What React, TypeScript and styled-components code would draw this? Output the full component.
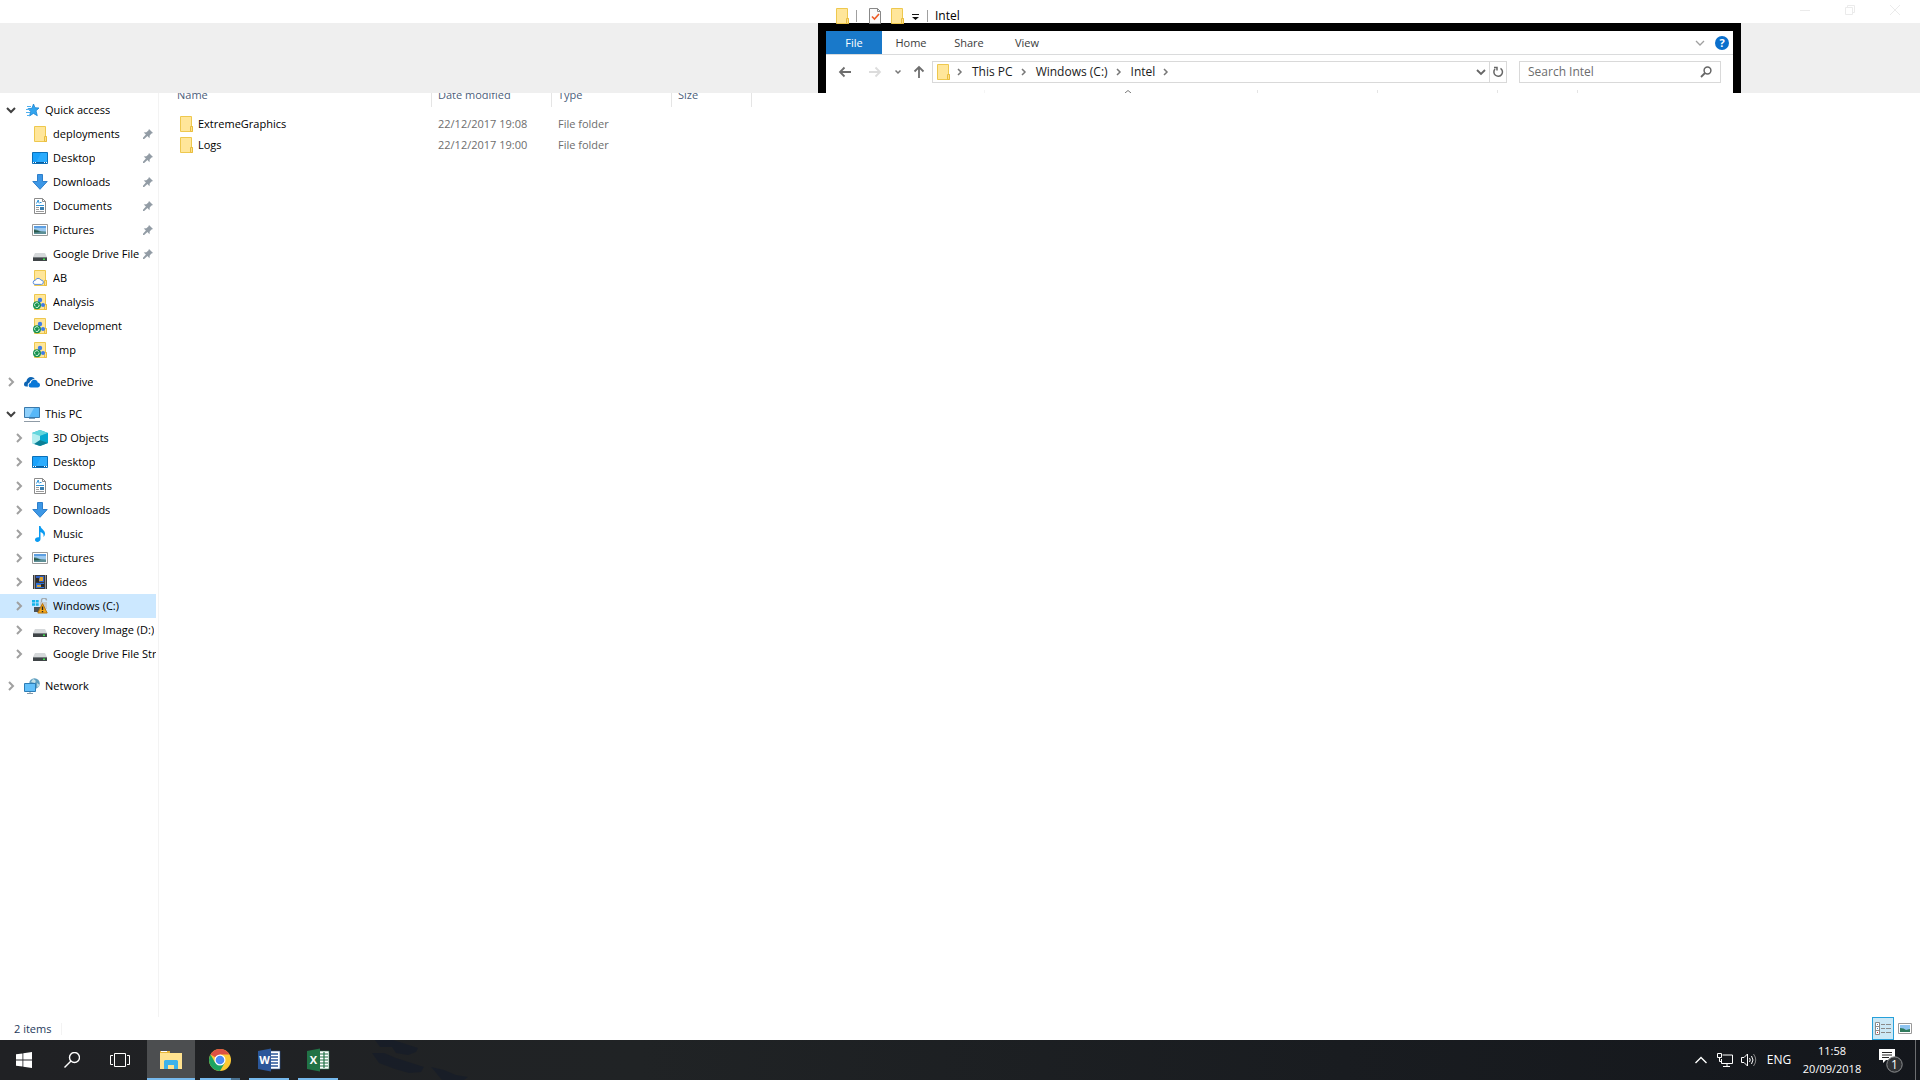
import React from 'react';
import styled, { createGlobalStyle } from 'styled-components';

const Global = createGlobalStyle`
  *{box-sizing:border-box}
  body{margin:0;background:#fff;font-family:"Open Sans","Noto Sans",sans-serif;font-size:12px;line-height:16px;color:#000}
  button,input{font:inherit;color:inherit;border:0;background:none;padding:0;margin:0}
  a{color:inherit;text-decoration:none}
  svg{display:block;flex:none}
  ul{list-style:none;margin:0;padding:0}
`;

/* ---------- icons ---------- */
const Svg = ({ w = 16, h = w, children }: { w?: number; h?: number; children?: React.ReactNode }) => (
  <svg width={w} height={h} viewBox={`0 0 ${w} ${h}`} aria-hidden="true">{children}</svg>
);
const FolderShape = () => (
  <>
    <path d="M2.5.5h11v10h.8v5H2.5z" fill="#ffe69a" stroke="#eec84e" />
    <path d="M12.5 10.5h2v5h-2z" fill="#ffe08a" stroke="#e8bd3f" />
  </>
);
const Folder = () => <Svg><FolderShape /></Svg>;
const CloudFolder = () => (
  <Svg><FolderShape /><path d="M3 14.4a2 2 0 0 1 .3-4 3 3 0 0 1 5.6-.3 2 2 0 0 1 .6 4.3z" fill="#fff" stroke="#5b8fe0" /></Svg>
);
const SharedFolder = () => (
  <Svg>
    <FolderShape />
    <circle cx="8" cy="6" r="2.2" fill="#3f7de8" /><circle cx="11" cy="11" r="2" fill="#3f7de8" />
    <circle cx="5" cy="11.3" r="4" fill="#16924f" />
    <path d="M3 12.2a2.2 2.2 0 0 1 3.6-2.6M7 10.6a2.2 2.2 0 0 1-3.4 2.5" fill="none" stroke="#d8f3e2" />
  </Svg>
);
const Desktop = () => (
  <Svg>
    <path d="M.5 2.5h15v11H.5z" fill="#1aa2fb" stroke="#0a6fb8" />
    <path d="M9 3h6v9.5H4z" fill="#38b2ff" opacity=".6" />
    <path d="M1 12h14v1H1z" fill="#0b5c9c" /><path d="M1 12h1v1H1zM3 12h1v1H3zM12 12h1v1h-1zM14 12h1v1h-1z" fill="#fff" />
  </Svg>
);
const Download = () => <Svg><path d="M5.5.5h5v7h4.7L8 15.3.8 7.5h4.7z" fill="#3c97e6" stroke="#2d7fcb" /></Svg>;
const Doc = () => (
  <Svg>
    <path d="M2.5.5h8l3 3v12h-11z" fill="#fff" stroke="#8b8b8b" /><path d="M10.5.5v3h3" fill="none" stroke="#8b8b8b" />
    <path d="M4.5 5.5 6.2 2l1 3.500M8 4.500h1.500" fill="none" stroke="#2c93d8" /><path d="M4 7.500h8" stroke="#2c93d8" />
    <path d="M4 9.500h3M4 11.500h3M4 13.500h8" stroke="#9b9b9b" /><path d="M8 9h4v3H8z" fill="#3c7fae" />
  </Svg>
);
const Picture = () => (
  <Svg>
    <path d="M.5 2.5h15v11H.5z" fill="#fff" stroke="#9a9a9a" />
    <path d="M2 4h12v8H2z" fill="#9cc9f0" /><path d="M2 4h12v2H2z" fill="#5d9fe2" />
    <path d="M2 7q3 .5 6 2l6 .5V12H2z" fill="#5d8f96" /><path d="M2 8q4 .4 7 2l-7 .5z" fill="#28584a" />
  </Svg>
);
const Drive = () => (
  <Svg>
    <path d="M3 7h10l2 4H1z" fill="#d5d8da" /><path d="M1 11h14v4H1z" fill="#3f4447" /><path d="M1 11h14v1H1z" fill="#777c80" />
    <path d="M11 12.500h2v1.500h-2z" fill="#3fe04e" />
  </Svg>
);
const Star = () => (
  <Svg>
    <path d="m9.500 2 1.500 3.700 4 .3-3 2.800 1.300 4.900-3.900-2.300L5.500 14l1.200-4.400L4 6.700l3.900-.4z" fill="#32a5ef" stroke="#1b83d2" strokeWidth=".8" />
    <path d="M3 4.500h4M2 7.500h4M2 10.500h4M3 13.500h3" stroke="#4fb0ef" />
  </Svg>
);
const Cloud = () => (
  <Svg>
    <path d="M0 10.500C0 8.500 1.200 7.500 2.400 7.400 2.800 4.700 4.500 3 7 3c1.800 0 3 .8 3.700 2C7.500 5 6 7 5.600 8.600 4 9 3.300 11 4 12.500H2C.8 12.500 0 11.600 0 10.500z" fill="#0c64b4" />
    <path d="M7 13.500a2.300 2.300 0 0 1-.2-4.600C7.200 6.800 8.700 5.700 10.400 5.700c1.800 0 3 1 3.300 2.700 1.400.1 2.300 1.200 2.300 2.600 0 1.500-1 2.500-2.400 2.500z" fill="#0a78d7" />
  </Svg>
);
const Pc = () => (
  <Svg>
    <path d="M.5 1.500h15v10H.5z" fill="#58b8f8" stroke="#3a79ab" /><path d="M1 2h9L5 11H1z" fill="#8fd0fb" />
    <path d="M5 12.500h6" stroke="#7aa0bd" /><path d="M0 15.500h16" stroke="#8f9ba6" />
  </Svg>
);
const Cube = () => (
  <Svg>
    <path d="M8 0l8 3v10l-8 3-8-3V3z" fill="#1cb4cf" /><path d="M0 3l8 2v11l-8-3z" fill="#b3eef0" />
    <path d="M0 3l8-3 8 3-8 3z" fill="#63d6dc" /><path d="M8 6l8-3v10l-8-3z" fill="#06a8d0" /><path d="M8 10l8 3-8 3-6-2z" fill="#0a7f96" />
  </Svg>
);
const Music = () => <Svg><path d="M7 0h1.500c.3 3 4.500 4 4.500 7.500 0 1.500-.6 2.600-1.500 3.500.6-3-.8-4.300-3-5v7c0 1.800-1.500 2.900-3.200 2.900C4 15.900 3 15 3 13.700c0-1.500 1.600-2.700 4-2.400z" fill="#0a9bf2" /></Svg>;
const Video = () => (
  <Svg>
    <path d="M1 1h14v14H1z" fill="#3b3b3b" />
    <path d="M2.500 1.500v14M13.500 1.500v14" stroke="#eee" strokeDasharray="1 1" />
    <path d="M4 2h8v6H4z" fill="#2f5fc4" /><path d="M4 9h8v5H4z" fill="#2b6fd8" />
    <path d="M8 3h3v4H7z" fill="#e0a22c" /><path d="M5 11h4v2H5z" fill="#d9a53a" /><path d="M4 4h3v4H4zM9 10h3v3H9z" fill="#2a2a2a" />
  </Svg>
);
const WinDrive = () => (
  <Svg>
    <path d="M0 2h3v2.500H0zM3.700 2h3v2.500h-3zM0 5.200h3v2.500H0zM3.700 5.200h3v2.500h-3z" fill="#14b4ea" />
    <path d="M2 9h6v5H2z" fill="#4c5154" />
    <path d="M9.500 4V2.500a2.500 2.500 0 0 1 5 0" fill="none" stroke="#a3a8ab" strokeWidth="1.400" /><path d="M8 4h7v7H8z" fill="#c3c9cd" />
    <path d="M10.500 5.500l4.700 9.500H5.800z" fill="#f3a81d" stroke="#b97610" /><path d="M10.500 8.500v3.500M10.500 13v1.200" stroke="#222" strokeWidth="1.400" />
  </Svg>
);
const Network = () => (
  <Svg>
    <circle cx="10.500" cy="5.500" r="5.300" fill="#5f9fc0" /><path d="M9 1q4 1 2 4l-4-1zM13 5l2.500 2-2 3z" fill="#c4e0e6" />
    <path d="M.5 5.500h11v8H.5z" fill="#62c0fa" stroke="#2d7db5" /><path d="M3 15.500h6M6 14v1" stroke="#8499a8" />
  </Svg>
);
const Pin = () => <Svg w={10}><path d="M6 0l4 4-1.500.6-1.800 2L6.500 9.300 4.400 7.100 1.200 10H0V8.800L2.900 5.600.7 3.500 3.400 3.300l2-1.800z" fill="#929ca5" /></Svg>;
const ChevR = () => <Svg w={8} h={10}><path d="M2 1l4 4-4 4" fill="none" stroke="#a0a0a0" strokeWidth="2" /></Svg>;
const ChevD = () => <Svg w={10} h={8}><path d="M1 2l4 4 4-4" fill="none" stroke="#404040" strokeWidth="2" /></Svg>;
const CrumbSep = () => <Svg w={6} h={8}><path d="M1 1l3 3-3 3" fill="none" stroke="#777" strokeWidth="1.500" /></Svg>;

/* ---------- layout ---------- */
const Page = styled.div`display:flex;flex-direction:column;min-height:100vh;`;
const columns = `display:grid;grid-template-columns:minmax(0,818fr) minmax(0,923fr) minmax(0,179fr);`;
const TitleBar = styled.header`${columns} height:23px;background:#fff;`;
const QuickBar = styled.div`grid-column:2;display:flex;align-items:center;padding:7px 0 0 16px;height:24px;position:relative;z-index:1;`;
const Bar = styled.span<{ $l: number; $r: number }>`width:1px;height:12px;background:#a0a0a0;margin:0 ${p => p.$r}px 0 ${p => p.$l}px;`;
const QuickButton = styled.button<{ $gap?: number }>`margin-right:${p => p.$gap || 0}px;display:flex;`;
const Title = styled.h1`font-size:12px;font-weight:400;line-height:16px;margin:0;`;
const WindowButtons = styled.div`display:flex;justify-content:flex-end;align-items:flex-start;gap:35px;padding:5px 20px 0 0;color:#ebebeb;`;
const Band = styled.section`${columns} height:70px;background:#efefef;`;
const Frame = styled.div`grid-column:2;border:8px solid #000;border-bottom:0;background:#fff;display:flex;flex-direction:column;overflow:hidden;`;
const Tabs = styled.nav`display:flex;height:24px;border-bottom:1px solid #dadbdc;align-items:stretch;flex:none;`;
const Tab = styled.button<{ $active?: boolean }>`
  font-size:11px;width:${p => (p.$active ? 56 : 58)}px;height:23px;
  background:${p => (p.$active ? '#1979ca' : 'transparent')};color:${p => (p.$active ? '#fff' : '#3b3b3b')};
`;
const TabTools = styled.div`margin-left:auto;display:flex;align-items:center;gap:10px;padding-right:4px;`;
const Help = styled.button`width:14px;height:14px;border-radius:50%;background:#0a6fcc;color:#fff;font-size:11px;font-weight:700;line-height:14px;`;
const Navigation = styled.div`display:flex;align-items:center;padding:6px 12px 0 12px;flex:none;`;
const NavButtons = styled.div`display:flex;align-items:center;gap:12px;width:94px;flex:none;`;
const Address = styled.div`display:flex;align-items:center;height:22px;border:1px solid #d9d9d9;flex:1;min-width:0;padding-left:2px;color:#1a1a1a;`;
const AddressFolder = styled.span`margin-right:6px;`;
const Crumb = styled.button`margin:0 8px 0 9px;white-space:nowrap;`;
const AddressButton = styled.button<{ $line?: boolean }>`
  display:flex;align-items:center;justify-content:center;width:17px;height:20px;
  margin-left:${p => (p.$line ? '0' : 'auto')};border-left:${p => (p.$line ? '1px solid #d9d9d9' : '0')};
`;
const Search = styled.label`display:flex;align-items:center;height:22px;border:1px solid #d9d9d9;width:202px;margin-left:12px;padding:0 8px;`;
const SearchInput = styled.input`flex:1;min-width:0;outline:0;&::placeholder{color:#6d6d6d;opacity:1}`;
const Remnant = styled.div`
  display:grid;grid-template-columns:159fr 273fr 120fr 120fr 80fr 155fr;height:3px;margin-top:7px;
  & > span{border-right:1px solid #e5e5e5;display:flex;justify-content:center;}
  & > span:first-child{border-color:#f5f5f5;}
  & > span:nth-child(2){padding-left:14px;}
`;

const Body = styled.main`display:flex;flex:1;`;
const Sidebar = styled.nav`width:159px;border-right:1px solid #f3f3f3;padding:5px 2px 0 0;flex:none;font-size:11px;`;
const Group = styled.ul`margin-bottom:8px;`;
const Item = styled.li<{ $child?: boolean; $on?: boolean }>`
  display:flex;align-items:center;height:24px;padding-left:${p => (p.$child ? 14 : 6)}px;background:${p => (p.$on ? '#cce8ff' : 'transparent')};
`;
const Toggle = styled.button`width:10px;height:10px;display:flex;align-items:center;justify-content:center;margin-right:8px;flex:none;`;
const Blank = styled.span`width:18px;flex:none;`;
const ItemLink = styled.a`display:flex;align-items:center;flex:1;min-width:0;gap:5px;`;
const Label = styled.span`white-space:nowrap;overflow:hidden;`;
const PinSlot = styled.span`padding:0 3px 0 2px;flex:none;`;

const Content = styled.section`flex:1;min-width:0;overflow:hidden;`;
const Table = styled.table`border-collapse:separate;border-spacing:0;table-layout:fixed;width:593px;font-size:11px;`;
const Th = styled.th<{ $w: number; $first?: boolean }>`
  width:${p => p.$w}px;height:14px;padding:0 0 0 ${p => (p.$first ? 18 : 6)}px;text-align:left;font-weight:400;color:#4c607a;border-right:1px solid #e5e5e5;vertical-align:top;
`;
const ThText = styled.span`display:flex;height:10px;align-items:flex-end;overflow:hidden;`;
const Td = styled.td<{ $first?: boolean }>`height:21px;padding:0 0 0 ${p => (p.$first ? 19 : 6)}px;color:${p => (p.$first ? '#000' : '#6d6d6d')};white-space:nowrap;`;
const Spacer = styled.tbody`& td{height:6px;padding:0}`;
const FileLink = styled.a`display:flex;align-items:center;gap:4px;`;
const Status = styled.footer`display:flex;align-items:center;height:23px;padding:0 8px 0 14px;color:#1e395b;font-size:11px;`;
const StatusCount = styled.span`padding-right:10px;border-right:1px solid #f3f3f3;line-height:12px;`;
const Views = styled.div`display:flex;align-items:center;margin-left:auto;gap:4px;`;
const ViewButton = styled.button<{ $on?: boolean }>`display:flex;align-items:center;justify-content:center;width:${p => (p.$on ? 22 : 14)}px;height:23px;border:${p => (p.$on ? '1px solid #26a0da' : '0')};background:${p => (p.$on ? '#cbe8f6' : 'none')};`;

const Taskbar = styled.footer`display:flex;height:40px;background:linear-gradient(90deg,#202124 0,#202325 640px,#191c20 70%,#14171c);color:#fff;`;
const Task = styled.button<{ $w?: number; $on?: boolean }>`
  width:${p => p.$w || 49}px;height:40px;display:flex;flex-direction:column;align-items:center;justify-content:center;position:relative;background:${p => (p.$on ? '#4c4e50' : 'none')};
`;
const System = styled.div`display:flex;margin-right:3px;`;
const Running = styled.span<{ $full?: boolean; $stack?: boolean }>`
  position:absolute;bottom:0;height:2px;left:${p => (p.$full ? 0 : 5)}px;right:${p => (p.$full ? 0 : 4)}px;
  background:${p => (p.$stack ? 'linear-gradient(90deg,#76b9ed 31px,#4a7291 31px)' : '#76b9ed')};
`;
const Wallpaper = styled.div`margin-left:28px;`;
const Tray = styled.div`display:flex;align-items:center;margin-left:auto;`;
const TrayButton = styled.button<{ $w: number }>`width:${p => p.$w}px;height:40px;display:flex;align-items:center;justify-content:center;`;
const Clock = styled.button`width:70px;height:40px;font-size:11px;line-height:18px;text-align:center;white-space:nowrap;`;
const ShowDesktop = styled.button`width:5px;height:40px;border-left:1px solid #6c6e70;`;

type Node = { name: string; icon: React.ReactNode; pin?: boolean; on?: boolean };
type Section = { name: string; icon: React.ReactNode; open?: boolean; toggles?: boolean; items: Node[] };
const sections: Section[] = [
  { name: 'Quick access', icon: <Star />, open: true, items: [
    { name: 'deployments', icon: <Folder />, pin: true }, { name: 'Desktop', icon: <Desktop />, pin: true },
    { name: 'Downloads', icon: <Download />, pin: true }, { name: 'Documents', icon: <Doc />, pin: true },
    { name: 'Pictures', icon: <Picture />, pin: true }, { name: 'Google Drive File Stream', icon: <Drive />, pin: true },
    { name: 'AB', icon: <CloudFolder /> }, { name: 'Analysis', icon: <SharedFolder /> },
    { name: 'Development', icon: <SharedFolder /> }, { name: 'Tmp', icon: <SharedFolder /> } ] },
  { name: 'OneDrive', icon: <Cloud />, items: [] },
  { name: 'This PC', icon: <Pc />, open: true, toggles: true, items: [
    { name: '3D Objects', icon: <Cube /> }, { name: 'Desktop', icon: <Desktop /> }, { name: 'Documents', icon: <Doc /> },
    { name: 'Downloads', icon: <Download /> }, { name: 'Music', icon: <Music /> }, { name: 'Pictures', icon: <Picture /> },
    { name: 'Videos', icon: <Video /> }, { name: 'Windows (C:)', icon: <WinDrive />, on: true },
    { name: 'Recovery Image (D:)', icon: <Drive /> }, { name: 'Google Drive File Stream', icon: <Drive /> } ] },
  { name: 'Network', icon: <Network />, items: [] },
];
const files = [
  { name: 'ExtremeGraphics', date: '22/12/2017 19:08', type: 'File folder' },
  { name: 'Logs', date: '22/12/2017 19:00', type: 'File folder' },
];

const Office = ({ color, letter, excel }: { color: string; letter: string; excel?: boolean }) => (
  <svg width="24" height="24" viewBox="0 0 24 24" aria-hidden="true">
    <path d="M12 3h11v18H12z" fill="#fff" stroke={color} strokeWidth=".6" />
    {excel
      ? <path d="M14 6h8M14 9h8M14 12h8M14 15h8M14 18h8M18 4v16" stroke={color} strokeWidth="1.200" />
      : <path d="M14 6h7M14 9h7M14 12h7M14 15h7M14 18h7" stroke={color} strokeWidth="1.300" />}
    <path d="M1 3l13-2.500v23L1 21z" fill={color} />
    <text x="7.500" y="16" fill="#fff" fontSize="11" fontWeight="700" textAnchor="middle" fontFamily="Open Sans, sans-serif">{letter}</text>
  </svg>
);

export default function App() {
  return (
    <Page>
      <Global />
      <TitleBar>
        <QuickBar>
          <Folder />
          <Bar $l={6} $r={10} />
          <QuickButton $gap={6} aria-label="Properties">
            <Svg><path d="M2.500.5h8l3 3v12h-11z" fill="#fafafa" stroke="#888" /><path d="M10.500.5v3h3" fill="none" stroke="#888" /><path d="M5 8.500l2.500 2.500 4.500-5" fill="none" stroke="#ee5a24" strokeWidth="1.600" /></Svg>
          </QuickButton>
          <QuickButton $gap={6} aria-label="New folder"><Folder /></QuickButton>
          <QuickButton aria-label="Customize Quick Access Toolbar"><Svg w={8} h={8}><path d="M1 2h7v1H1zM1 5h7L4.500 8z" fill="#111" /></Svg></QuickButton>
          <Bar $l={8} $r={7} />
          <Title>Intel</Title>
        </QuickBar>
        <WindowButtons>
          <QuickButton aria-label="Minimize"><Svg w={10}><path d="M0 5.500h10" stroke="currentColor" /></Svg></QuickButton>
          <QuickButton aria-label="Restore"><Svg w={10}><path d="M.5 2.500h7v7h-7zM2.500 2V.5h7v7H8" fill="none" stroke="currentColor" /></Svg></QuickButton>
          <QuickButton aria-label="Close"><Svg w={10}><path d="M0 0l10 10M10 0L0 10" stroke="currentColor" /></Svg></QuickButton>
        </WindowButtons>
      </TitleBar>

      <Band>
        <Frame>
          <Tabs>
            <Tab $active>File</Tab><Tab>Home</Tab><Tab>Share</Tab><Tab>View</Tab>
            <TabTools>
              <QuickButton aria-label="Expand the ribbon"><Svg w={10} h={6}><path d="M1 1l4 4 4-4" fill="none" stroke="#a0a0a0" strokeWidth="1.300" /></Svg></QuickButton>
              <Help aria-label="Help">?</Help>
            </TabTools>
          </Tabs>
          <Navigation>
            <NavButtons>
              <QuickButton $gap={4} aria-label="Back"><Svg w={14} h={12}><path d="M13 6H2M6.500 1.500L2 6l4.500 4.500" fill="none" stroke="#6e6e6e" strokeWidth="1.800" /></Svg></QuickButton>
              <QuickButton $gap={1} aria-label="Forward"><Svg w={14} h={12}><path d="M1 6h11M7.500 1.500L12 6l-4.500 4.500" fill="none" stroke="#dcdcdc" strokeWidth="1.800" /></Svg></QuickButton>
              <QuickButton aria-label="Recent locations"><Svg w={6} h={6}><path d="M.5 1.500L3 4l2.500-2.500" fill="none" stroke="#777" strokeWidth="1.500" /></Svg></QuickButton>
              <QuickButton aria-label="Up"><Svg w={12} h={14}><path d="M6 13V2M1.500 6.500L6 2l4.500 4.500" fill="none" stroke="#6e6e6e" strokeWidth="1.800" /></Svg></QuickButton>
            </NavButtons>
            <Address>
              <AddressFolder><Folder /></AddressFolder>
              <CrumbSep /><Crumb>This PC</Crumb><CrumbSep /><Crumb>Windows (C:)</Crumb><CrumbSep /><Crumb>Intel</Crumb><CrumbSep />
              <AddressButton aria-label="Previous locations"><Svg w={10} h={8}><path d="M1 2l4 4 4-4" fill="none" stroke="#666" strokeWidth="1.800" /></Svg></AddressButton>
              <AddressButton $line aria-label="Refresh"><Svg w={12} h={12}><path d="M8.500 2.300A4.300 4.300 0 1 1 3 3M2 1.500h3v3" fill="none" stroke="#666" strokeWidth="1.500" /></Svg></AddressButton>
            </Address>
            <Search>
              <SearchInput type="search" placeholder="Search Intel" aria-label="Search Intel" />
              <Svg w={12}><circle cx="7.500" cy="4.500" r="3.400" fill="none" stroke="#666" strokeWidth="1.500" /><path d="M5 7L1 11" stroke="#666" strokeWidth="1.800" /></Svg>
            </Search>
          </Navigation>
          <Remnant><span /><span><Svg w={6} h={3}><path d="M0 3l3-2.500L6 3" fill="none" stroke="#777" /></Svg></span><span /><span /><span /></Remnant>
        </Frame>
      </Band>

      <Body>
        <Sidebar aria-label="Folders">
          {sections.map(s => (
            <Group key={s.name}>
              <Item>
                <Toggle aria-label={`Toggle ${s.name}`}>{s.open ? <ChevD /> : <ChevR />}</Toggle>
                <ItemLink href="#">{s.icon}<Label>{s.name}</Label></ItemLink>
              </Item>
              {s.items.map(n => (
                <Item key={n.name} $child $on={n.on}>
                  {s.toggles ? <Toggle aria-label={`Toggle ${n.name}`}><ChevR /></Toggle> : <Blank />}
                  <ItemLink href="#">{n.icon}<Label>{n.name}</Label></ItemLink>
                  {n.pin && <PinSlot><Pin /></PinSlot>}
                </Item>
              ))}
            </Group>
          ))}
        </Sidebar>
        <Content>
          <Table>
            <thead>
              <tr>
                <Th $w={273} $first><ThText>Name</ThText></Th><Th $w={120}><ThText>Date modified</ThText></Th>
                <Th $w={120}><ThText>Type</ThText></Th><Th $w={80}><ThText>Size</ThText></Th>
              </tr>
            </thead>
            <Spacer><tr><td colSpan={4} /></tr></Spacer>
            <tbody>
              {files.map(f => (
                <tr key={f.name}>
                  <Td $first><FileLink href="#"><Folder />{f.name}</FileLink></Td><Td>{f.date}</Td><Td>{f.type}</Td><Td />
                </tr>
              ))}
            </tbody>
          </Table>
        </Content>
      </Body>

      <Status>
        <StatusCount>2 items</StatusCount>
        <Views>
          <ViewButton $on aria-label="Details view"><Svg w={16} h={14}><path d="M.5.5h4v12h-4zM.5 4.500h4M.5 8.500h4" fill="#fff" stroke="#8a8a8a" /><path d="M2 2h1v1H2z" fill="#4a86c8" /><path d="M2 6h1v1H2z" fill="#4a86c8" /><path d="M2 10h1v1H2z" fill="#d22" /><path d="M6 2.500h4M11 2.500h5M6 6.500h4M11 6.500h5M6 10.500h4M11 10.500h5" stroke="#8a8a8a" /></Svg></ViewButton>
          <ViewButton aria-label="Large icons view"><Svg w={14} h={12}><path d="M.5.5h13v10H.5z" fill="#fff" stroke="#9a9a9a" /><path d="M2 2h10v7H2z" fill="#8fc4f0" /><path d="M2 5q4 0 6 2l4-1v3H2z" fill="#2f7a5c" /></Svg></ViewButton>
        </Views>
      </Status>

      <Taskbar>
        <System>
          <Task $w={48} aria-label="Start"><Svg><path d="M0 2.300L6.500 1.400v6.200H0zM7.300 1.300L16 0v7.600H7.300zM0 8.400h6.500v6.200L0 13.700zM7.300 8.400H16V16l-8.700-1.300z" fill="#fff" /></Svg></Task>
          <Task $w={48} aria-label="Search"><Svg><circle cx="10.500" cy="5.500" r="5" fill="none" stroke="#fff" strokeWidth="1.400" /><path d="M7 9L.5 15.500" stroke="#fff" strokeWidth="1.400" /></Svg></Task>
          <Task $w={48} aria-label="Task view"><Svg w={20} h={14}><path d="M4.500.5h11v13h-11zM3 2.500H.5v9H3M17 2.500h2.500v9H17" fill="none" stroke="#fff" /></Svg></Task>
        </System>
        <Task $w={48} $on aria-label="File Explorer">
          <Svg w={24} h={20}><path d="M1 1h10v3H1z" fill="#e6b53a" /><path d="M1 3h22v16H1z" fill="#ffe28f" /><path d="M2 1h6v1H2z" fill="#fff" /><path d="M5 19v-8l1-1h12l1 1v8h-4v-4H9v4z" fill="#3db2ea" /></Svg>
          <Running $full />
        </Task>
        <Task aria-label="Google Chrome">
          <Svg w={24}><circle cx="12" cy="12" r="11" fill="#fcc934" /><path d="M12 12L2.500 6.500A11 11 0 0 1 21.500 6.500H12z" fill="#dd5144" /><path d="M2.500 6.500A11 11 0 0 0 12 23l4.800-8.200L12 12 7.200 14.700z" fill="#1da462" /><circle cx="12" cy="12" r="5.500" fill="#fff" /><circle cx="12" cy="12" r="4.300" fill="#4c8bf5" /></Svg>
          <Running $stack />
        </Task>
        <Task aria-label="Word"><Office color="#2b579a" letter="W" /><Running /></Task>
        <Task aria-label="Excel"><Office color="#217346" letter="X" excel /><Running /></Task>
        <Wallpaper>
          <Svg w={104} h={40}><path d="M5 0h18l25 8-2 4-8 3-12-2-4-6H10zM2 13l12 0 12 5 28 9-3 5-12 1-14-4-16-6zM61 27l13 3 12 5 12 2-4 3H72z" fill="#171d28" opacity=".8" /></Svg>
        </Wallpaper>
        <Tray>
          <TrayButton $w={24} aria-label="Show hidden icons"><Svg w={12} h={8}><path d="M.5 7L6 1.500 11.500 7" fill="none" stroke="#fff" strokeWidth="1.400" /></Svg></TrayButton>
          <TrayButton $w={24} aria-label="Network"><Svg w={16} h={14}><path d="M5.500 2h10v8.500H4.500V6M10 11v2.500M6 13.500h7M.5.5h4v4h-4zM2.500 5v3.500H4" fill="none" stroke="#fff" /></Svg></TrayButton>
          <TrayButton $w={24} aria-label="Volume"><Svg w={16} h={14}><path d="M.5 4.500H3L6.500 1v12L3 9.500H.5z" fill="none" stroke="#fff" /><path d="M8.500 5q1.500 2 0 4M10.500 3q3 4 0 8" fill="none" stroke="#fff" /><path d="M12.500 1q4.500 6 0 12" fill="none" stroke="#888" /></Svg></TrayButton>
          <TrayButton $w={36}>ENG</TrayButton>
          <Clock>11:58<br />20/09/2018</Clock>
          <TrayButton $w={48} aria-label="Notifications"><Svg w={24} h={26}><path d="M0 2h16v11H7l-3 3v-3H0z" fill="#fff" /><path d="M3 5.500h10M3 8h10M3 10.500h7" stroke="#222" /><circle cx="15.500" cy="17.500" r="7.700" fill="#303235" stroke="#8d8f91" /><text x="15.500" y="22" fill="#fff" fontSize="12" textAnchor="middle">1</text></Svg></TrayButton>
          <ShowDesktop aria-label="Show desktop" />
        </Tray>
      </Taskbar>
    </Page>
  );
}
